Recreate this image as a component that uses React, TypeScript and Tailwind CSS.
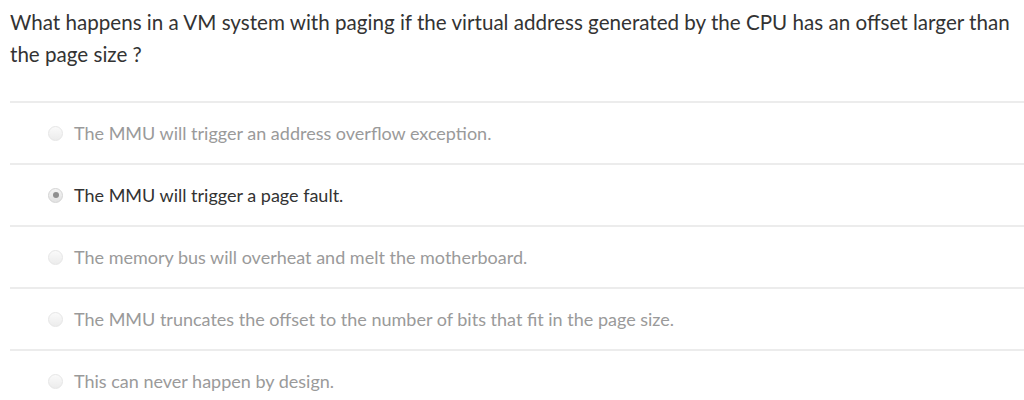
import React from "react";

const options = [
  { text: "The MMU will trigger an address overflow exception.", selected: false },
  { text: "The MMU will trigger a page fault.", selected: true },
  { text: "The memory bus will overheat and melt the motherboard.", selected: false },
  { text: "The MMU truncates the offset to the number of bits that fit in the page size.", selected: false },
  { text: "This can never happen by design.", selected: false },
];

function Radio({ selected }: { selected: boolean }) {
  return selected ? (
    <span className="flex h-[15px] w-[15px] shrink-0 items-center justify-center rounded-full border border-[#d4d4d4] bg-gradient-to-b from-[#f4f4f4] to-[#e2e2e2]">
      <span className="h-[6px] w-[6px] rounded-full bg-[#8f8f8f]" />
    </span>
  ) : (
    <span className="h-[15px] w-[15px] shrink-0 rounded-full border border-[#e6e6e6] bg-gradient-to-b from-[#fafafa] to-[#ececec]" />
  );
}

export default function App() {
  return (
    <div className="min-h-[400px] bg-white pl-[10px] pt-[6px]" style={{ fontFamily: "Lato, 'Open Sans', sans-serif" }}>
      <div className="text-[20.6px] leading-[32px] text-[#333333]">
        What happens in a VM system with paging if the virtual address generated by the CPU has an offset larger than the page size ?
      </div>
      <div className="mt-[31px]">
        {options.map((o, i) => (
          <div key={i} className="flex h-[62px] items-center gap-[11px] border-t-2 border-[#ececec] pl-[38px]">
            <Radio selected={o.selected} />
            <span className={"text-[18px] " + (o.selected ? "text-[#333333]" : "text-[#9a9a9a]")}>{o.text}</span>
          </div>
        ))}
      </div>
    </div>
  );
}
